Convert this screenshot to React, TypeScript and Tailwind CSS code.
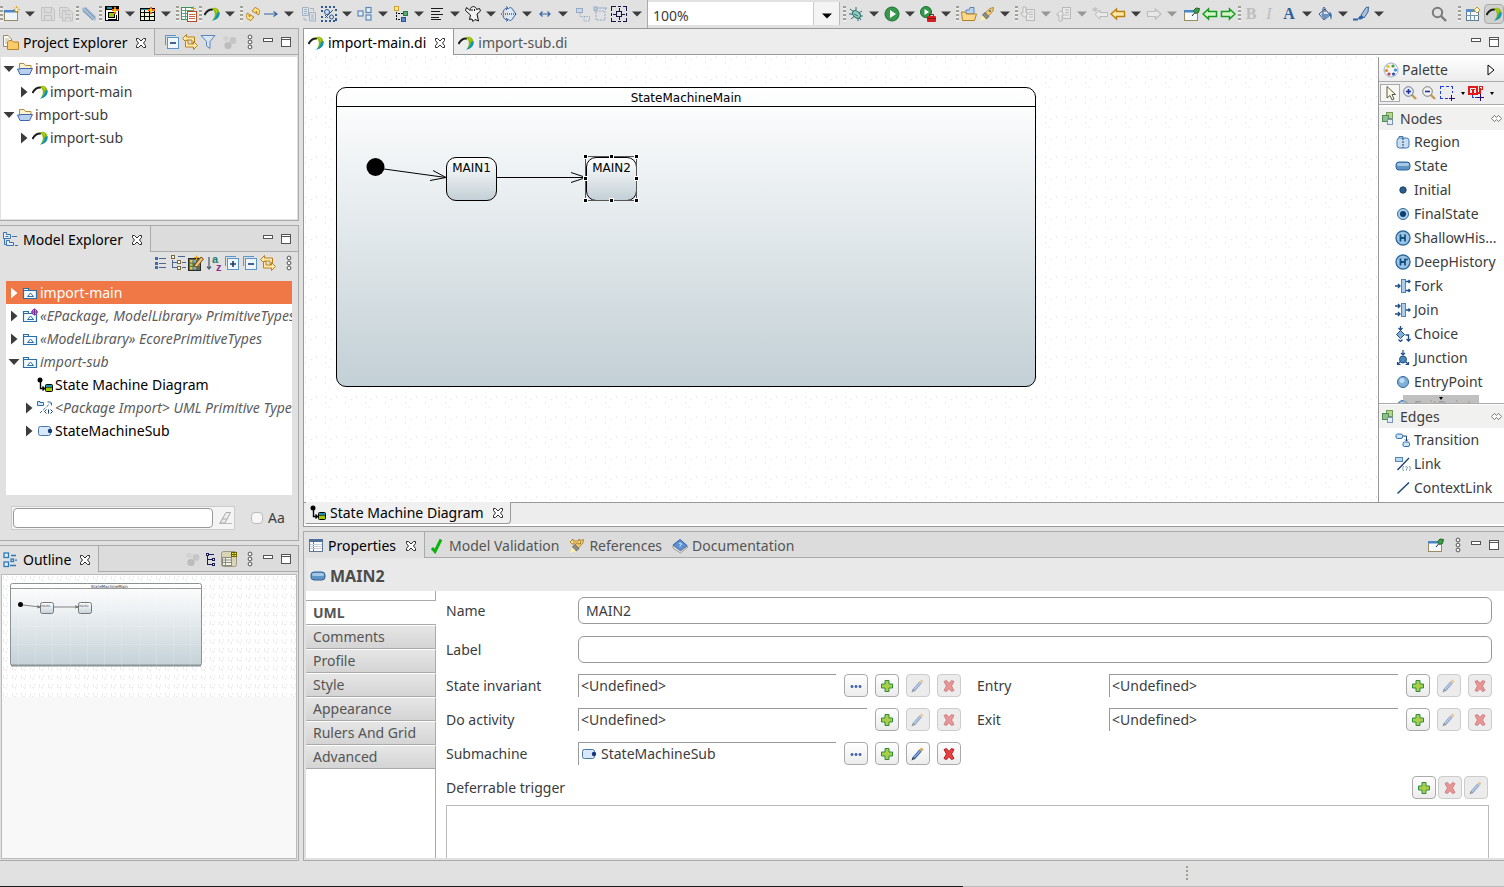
import { useState } from "react";
import type { ReactNode } from "react";
import clsx from "clsx";

const BLUE = "#3465a4";
const DARK = "#3c3c3c";

const papyrus = (
  <>
    <path d="M0.5 9C2.5 5 5.5 3.2 9 3.5" fill="none" stroke="#1c1c1c" strokeWidth="2" />
    <path d="M7.5 2.5C11 0.5 15.5 2.5 15.5 7.5C15.5 11 13 13.5 8.5 14.5C10 12 11 10 10.8 7.5C10.6 5.200 9.500 3.500 7.500 2.500Z" fill="#8fb80c" />
    <path d="M9 2.500C12 2 13.500 4 13 7C12.500 5 11 3.500 9 2.500Z" fill="#b9d92c" />
    <path d="M15.500 6C16.200 11 13 14 8 14.700C11 12.500 12.500 10 13 7Z" fill="#0b94bd" />
  </>
);

const plusCross = (
  <path d="M6 2.5h4V6h3.5v4H10v3.5H6V10H2.5V6H6Z" fill="#a8cf45" stroke="#2e8b46" />
);

const pencil = (
  <>
    <path d="M3.5 12.5L10.5 4.5" stroke="#23549c" strokeWidth="3" />
    <path d="M4 11.500L10.500 4.500" stroke="#8fb6e8" strokeWidth="1.200" />
    <path d="M10.5 4.5L12.5 2.5" stroke="#d9a54a" strokeWidth="3" />
    <path d="M1.5 14.5L2.5 11.5L4.5 13Z" fill="#333" />
  </>
);

const folderTri = (
  <>
    <path d="M1.5 13.5V3.5H6.5V5.5H14.5V13.5Z" fill="#f4f9fd" stroke="#2a6fa8" strokeWidth="1.2" />
    <path d="M1.5 5.5H7" stroke="#2a6fa8" />
    <path d="M5.5 11.5L8.5 8L11.5 11.5Z" fill="#fff" stroke="#2a6fa8" />
  </>
);

const cubes = (
  <>
    <rect x="5.5" y="1.5" width="6" height="6" fill="#b9d48c" stroke="#6f9a5a" />
    <rect x="1.5" y="4.5" width="6" height="6" fill="#8fbf8a" stroke="#4f8a5a" />
    <rect x="6.5" y="8.5" width="5" height="5" fill="#e3eef8" stroke="#7894b5" />
  </>
);

const roundH = (
  <>
    <circle cx="8" cy="8" r="7" fill="#9cc4e4" stroke="#2f6a9f" strokeWidth="1.4" />
    <path d="M5.5 4.5V11.5M10 4.5V11.5M5.5 8H10" stroke="#14507f" strokeWidth="1.8" />
  </>
);

const pin = (
  <>
    <rect x="0.5" y="4.5" width="13" height="10" fill="#f4f9fd" stroke="#9a8b5c" />
    <rect x="0" y="4" width="14" height="2.5" fill="#4a86c6" />
    <path d="M8 10L11 6.5" stroke="#222" />
    <path d="M9.5 4.5L12 2L15.5 2.5L14.5 6.5L11.5 7.5Z" fill="#3f9a45" stroke="#1d6b2b" />
  </>
);

const flashlight = (
  <>
    <path d="M5 8L11 2.5L14.5 1.5L14 5L8.5 11Z" fill="#f5cf72" stroke="#b88a2d" />
    <path d="M3.5 9L6 6.5L10 10.5L7 13Z" fill="#8d8d8d" stroke="#666" />
    <path d="M1 15L3.5 9.5L7 13Z" fill="#fff3a0" />
    <circle cx="11" cy="5" r="1" fill="#3465a4" />
  </>
);

const ICONS: Record<string, ReactNode> = {
  papyrus,
  newWizard: (
    <>
      <rect x="0.5" y="4.5" width="13" height="10" fill="#eef6fc" stroke="#9a8b5c" />
      <rect x="0" y="4" width="14" height="2.5" fill="#4a86c6" />
      <path d="M12.5 0V7M9 3.5H16M10.5 1.5L14.5 5.5M14.5 1.5L10.5 5.5" stroke="#d2a43a" />
      <circle cx="12.5" cy="3.5" r="1.5" fill="#fff6c4" />
    </>
  ),
  save: (
    <g fill="none" stroke="#c3c3c3">
      <path d="M1.5 1.5H12.5L14.5 3.5V14.5H1.5Z" fill="#dadada" />
      <path d="M4.5 1.5V6.5H11.5V1.5M4.5 14.5V9.5H11.5V14.5" />
    </g>
  ),
  saveAll: (
    <g fill="#dadada" stroke="#c3c3c3">
      <path d="M1.5 1.5H9.5L11.5 3.5V11.5H1.5Z" />
      <path d="M4.5 4.5H12.5L14.5 6.5V15H4.5Z" />
      <path d="M7.5 4.5V8.5H12.5M7.5 15V11.5H12.5V15" />
    </g>
  ),
  wrench: (
    <>
      <path d="M1 2L5 1L15 10.5L14.5 14.5L11 14L1.5 5.5Z" fill="#a9bdd3" />
      <path d="M4 2L14 12M2 4.5L12 14" stroke="#6f90b3" />
    </>
  ),
  tableBlack: (
    <g shapeRendering="crispEdges">
      <rect x="1" y="0" width="14" height="15" fill="#000" />
      <rect x="2" y="4" width="12" height="10" fill="#fff" />
      <rect x="3" y="1" width="5" height="2" fill="#1292b4" />
      <rect x="4.5" y="6.500" width="6" height="5" fill="#9cc80e" stroke="#000" />
      <path d="M12.5 9V14M4 13.500H12" stroke="#000" />
      <path d="M11 1V8M7.500 4H15" stroke="#f26522" strokeWidth="2" />
      <path d="M11 3V6" stroke="#ffd800" strokeWidth="2" />
    </g>
  ),
  tableGrid: (
    <g shapeRendering="crispEdges">
      <rect x="0.5" y="2.5" width="14" height="12" fill="#e9f3d0" stroke="#000" />
      <path d="M0 6.5H15M0 10.5H15M4.5 3V15M9.5 3V15" stroke="#000" />
      <rect x="1" y="3" width="8" height="1" fill="#1292b4" />
      <path d="M11 1V8M7.5 4H15" stroke="#f26522" strokeWidth="2" />
      <path d="M11 3V6" stroke="#ffd800" strokeWidth="2" />
    </g>
  ),
  tableDoc: (
    <g shapeRendering="crispEdges">
      <rect x="0.5" y="1.5" width="12" height="12" fill="#fff" stroke="#3e8e5f" />
      <path d="M0 4.5H13M4.5 2V14M0 7.5H13M0 10.500H13" stroke="#5aa779" />
      <rect x="6.5" y="5.5" width="9" height="10" fill="#fff" stroke="#b04b22" />
      <path d="M8 8.5H14M8 10.5H14M8 12.5H14" stroke="#c9683e" />
      <path d="M12.5 0V5M10 2.5H15" stroke="#dba62a" />
    </g>
  ),
  refresh: (
    <g fill="#ffe38a" stroke="#b8821a">
      <path d="M7 5L10.500 1L11.500 2.500C14.500 2.500 15.500 5.500 13.500 9L11.500 7.500C12.500 6 12 5 11 5.500L11.500 7.500Z" />
      <path d="M9 11L5.500 15L4.500 13.500C1.500 13.500 0.500 10.500 2.500 7L4.500 8.500C3.500 10 4 11 5 10.500L4.500 8.500Z" />
    </g>
  ),
  arrowBlue: <path d="M1 8H14M10.5 5.5L14 8L10.5 10.5" fill="none" stroke={BLUE} strokeWidth="1.2" />,
  copyGrey: (
    <g fill="#dde3ea" stroke="#a3b1c0">
      <path d="M1.5 1.5H7.5V9.5H1.5Z" />
      <path d="M3 3.5H6M3 5.5H6M3 7.5H6M9 2.5H12.5V5" fill="none" />
      <path d="M8.5 6.5H14.5V15H8.5Z" />
      <path d="M10 9H13M10 11H13M10 13H13M3 11.5V14H6" fill="none" />
    </g>
  ),
  selectAll: (
    <g fill="none" stroke="#2c5a94">
      <path d="M0 1H2M4 1H6M8 1H10M12 1H14M0 15H2M4 15H6M8 15H10M12 15H14M1 4V6M1 10V12M15 3V5M15 8V10M15 12V15" strokeWidth="2" />
      <circle cx="6" cy="6" r="2.5" fill="#cfe0f2" />
      <circle cx="10.5" cy="11" r="2" fill="#cfe0f2" />
      <path d="M12 4L4 12M4 9L7 12" />
    </g>
  ),
  threeBoxes: (
    <g fill="#e4eef8" stroke="#5c87b8" strokeWidth="1.2">
      <rect x="1" y="5" width="5" height="5" />
      <rect x="9" y="1.5" width="5" height="5" />
      <rect x="9" y="9" width="5" height="5" />
    </g>
  ),
  arrange: (
    <g shapeRendering="crispEdges">
      <rect x="1.5" y="0.5" width="4" height="4" fill="#ffe9a6" stroke="#d3a024" />
      <rect x="10.5" y="5.5" width="4" height="4" fill="#55b070" stroke="#2d7a45" />
      <rect x="8.5" y="11.5" width="4" height="4" fill="#5b86c9" stroke="#2e5698" />
      <path d="M3.5 6V13.5H8M5 7.5H10" stroke="#111" fill="none" strokeDasharray="2 1" />
    </g>
  ),
  alignLeft: <path d="M2 2.5H14M2 5.5H11M2 8.5H14M2 11.500H10M2 13.500H12" stroke="#1d1d1d" shapeRendering="crispEdges" />,
  ghost: (
    <g fill="#f3f3f3" stroke="#111">
      <path d="M5 4.500C5 -0.500 11 -0.500 11.500 3.500L14.500 2.500L15.500 5L12 8L13.500 15L10 13.500L8 15.500L7 13L4.500 13.500L5.500 9L0.500 4.500L1.500 1.500L4.500 4Z" />
      <path d="M7 3V5M9.500 3V5" />
    </g>
  ),
  flip: (
    <g fill="none" stroke={BLUE}>
      <path d="M7 3C9 1 10.500 1 12 4L15 8L12 12C10 15.500 9 15 7 13" fill="#dbe9f6" />
      <path d="M2 7C2 4 4 2 7 2M2 9C2 12 4 14 7 14M5 0.500L7 2L5 4M5 12L7 14L5 15.500" />
      <path d="M0 8H16" stroke="#111" strokeDasharray="1 1" />
    </g>
  ),
  leftRight: <path d="M3 8H13M5.5 5.5L3 8L5.5 10.5M10.5 5.5L13 8L10.5 10.5" fill="none" stroke={BLUE} strokeWidth="1.2" />,
  moveGrey: (
    <g fill="#cbd8e7" stroke="#94abc6">
      <rect x="1.5" y="2.5" width="6" height="4" />
      <path d="M5 7V10.5H8M9 10.5H14.5V15H9Z" fill="none" strokeDasharray="1.5 1" />
    </g>
  ),
  sizeGrey: (
    <g fill="none" stroke="#94abc6">
      <rect x="3" y="5" width="9" height="9" strokeDasharray="2 1" />
      <path d="M2 2H14M2 2V6M14 2L12 4" />
      <rect x="1" y="1" width="3" height="3" fill="#cbd8e7" />
    </g>
  ),
  fitPage: (
    <g fill="none" stroke="#15154a" shapeRendering="crispEdges">
      <path d="M0.5 4.5V0.5H4.5M11.5 0.5H15.5V4.5M15.5 11.5V15.5H11.5M4.5 15.5H0.5V11.5M6.5 0.5H9.5M6.5 15.5H9.5M0.5 6.5V9.5M15.5 6.5V9.5" />
      <rect x="5.5" y="5.5" width="5" height="5" />
      <path d="M8 2V5M8 11V14M2 8H5M11 8H14" />
    </g>
  ),
  bug: (
    <g stroke="#2d6d78" fill="none">
      <path d="M2 3L6 6M1 8H5M3 13L6 10.5M8 1V4M14 5L11 7M15 10H11M10 15V12M13 14L11 11" />
      <ellipse cx="8.5" cy="8.5" rx="4.5" ry="3" fill="#8fd0a4" transform="rotate(40 8.5 8.5)" />
      <path d="M6 8L10 10" stroke="#3d66c0" />
    </g>
  ),
  run: (
    <>
      <circle cx="8" cy="8" r="7" fill="#34994a" stroke="#1e6e34" />
      <path d="M6 4V12L12 8Z" fill="#fff" />
    </>
  ),
  runTools: (
    <>
      <circle cx="6" cy="6" r="5.5" fill="#34994a" stroke="#1e6e34" />
      <path d="M4.5 3V9L9 6Z" fill="#fff" />
      <rect x="7" y="10" width="9" height="6" rx="1" fill="#d81f1f" />
      <path d="M9.5 10V8.5H13.5V10" fill="none" stroke="#8e1010" />
      <path d="M7 12.5H16" stroke="#8e1010" />
    </>
  ),
  openType: (
    <>
      <path d="M5 8V4H8L9 1.5H13V8Z" fill="#b8d2ee" stroke="#5a83b8" />
      <path d="M1.5 14.5L0.5 6H4L5.5 8H15.5L13.5 14.5Z" fill="#fbd88a" stroke="#b17f22" />
    </>
  ),
  flashlight,
  annNext: (
    <g fill="#e9e9e9" stroke="#b9b9b9">
      <rect x="6.5" y="3.5" width="8" height="11" />
      <path d="M9 6H13M9 8.5H13M9 11H13" />
      <path d="M3 1H6V7H8.5L4.5 11.5L0.5 7H3Z" />
    </g>
  ),
  annPrev: (
    <g fill="#e9e9e9" stroke="#b9b9b9">
      <rect x="6.5" y="1.5" width="8" height="11" />
      <path d="M9 4H13M9 6.5H13M9 9H13" />
      <path d="M3 15H6V9H8.5L4.5 4.5L0.5 9H3Z" />
    </g>
  ),
  lastEdit: (
    <g fill="#eaeaea" stroke="#b9b9b9">
      <path d="M3 8.5L8 4V6.5H15.5V10.5H8V13Z" />
      <path d="M3 1V6M0.5 2.5L5.5 4.5M5.5 2.5L0.5 4.5" />
    </g>
  ),
  backYellow: <path d="M1 8L6.5 3V5.5H14.5V10.5H6.5V13Z" fill="#ffe9a8" stroke="#bd7e10" strokeWidth="1.4" />,
  fwdGrey: <path d="M15 8L9.5 3V5.5H1.5V10.5H9.5V13Z" fill="#e8e8e8" stroke="#bcbcbc" strokeWidth="1.2" />,
  backGreen: <path d="M1 8L6.5 3V5.5H14.5V10.5H6.5V13Z" fill="#d6f5c8" stroke="#159a20" strokeWidth="1.5" />,
  fwdGreen: <path d="M15 8L9.5 3V5.5H1.5V10.5H9.5V13Z" fill="#d6f5c8" stroke="#159a20" strokeWidth="1.5" />,
  pin,
  bucket: (
    <>
      <path d="M2 8L8 3L13 9L7 14Z" fill="#dbe4ef" stroke="#39557c" />
      <path d="M4 8H13L7 14Z" fill="#6a90c2" />
      <path d="M6 8V2.5C6 1 8 1 8 2.5V6" fill="none" stroke="#39557c" />
      <path d="M12 6C15 6 15.5 10 14 14C13 11 13 9 12 6Z" fill="#3a6fb5" />
    </>
  ),
  brush: (
    <>
      <path d="M8 9L13 1.5L15.5 1L15 6L11 12Z" fill="#a8c0dc" stroke="#39659b" />
      <path d="M5 13C6 9.5 8 8.5 10 10.5C10.5 13 8 14.5 5 13Z" fill="#2f62a8" />
      <path d="M0 13.5H5" stroke="#2f62a8" strokeWidth="2" />
    </>
  ),
  search: (
    <g fill="none" stroke="#7b7b7b">
      <circle cx="6.5" cy="6.5" r="4.7" strokeWidth="2" />
      <path d="M10 10L15 15" strokeWidth="2.4" />
    </g>
  ),
  perspective: (
    <>
      <rect x="1.5" y="3.5" width="12" height="11" fill="#f6f9fc" stroke="#5d7a8e" />
      <rect x="1" y="3" width="9" height="3" fill="#5a8fc8" />
      <path d="M1 9.5H14M5.5 6V15M9.5 9V15" stroke="#7895a8" />
      <path d="M12 1L15 4L12 7L9 4Z" fill="#fff6cf" stroke="#c8962a" />
    </>
  ),
  projExplorer: (
    <>
      <path d="M0.5 0.5H5L8.5 4V11.5H0.5Z" fill="#fff" stroke="#a88a4c" />
      <path d="M2 4H6M2 6H6M2 8H4" stroke="#c2b48e" />
      <path d="M4.5 14.5V7L6 5.500H9L10.500 7H15.5V14.5Z" fill="#f9cb6b" stroke="#b9832a" />
    </>
  ),
  collapse: (
    <g fill="#eef6fc" stroke="#5b94c6">
      <path d="M1.5 11V1.5H12" fill="none" />
      <rect x="3.5" y="3.5" width="11" height="11" />
      <path d="M6 9H12" stroke="#163f73" strokeWidth="1.6" />
    </g>
  ),
  expand: (
    <g fill="#eef6fc" stroke="#5b94c6">
      <path d="M1.5 11V1.5H12" fill="none" />
      <rect x="3.5" y="3.5" width="11" height="11" />
      <path d="M6 9H12M9 6V12" stroke="#163f73" strokeWidth="1.6" />
    </g>
  ),
  link: (
    <g fill="#ffe9ae" stroke="#b8821a">
      <path d="M0.5 4.500L4.500 0.500V3H12.500V9.500H10V6H4.500V8.500Z" />
      <path d="M15.500 11.500L11.500 7.500V10H6V6.500H3.500V13H11.500V15.500Z" />
    </g>
  ),
  filter: <path d="M1 1.5H15L10 7.5V14.5L6.5 12V7.5Z" fill="#d5e5f4" stroke="#5b86b5" />,
  balls: (
    <g fill="#c6c6c6">
      <circle cx="4" cy="4.5" r="2.8" fill="#d2d2d2" />
      <circle cx="11" cy="6.5" r="3.4" />
      <circle cx="6" cy="11.5" r="3.6" fill="#bcbcbc" />
    </g>
  ),
  dots: (
    <g fill="#fafafa" stroke="#555">
      <circle cx="8" cy="3" r="1.9" />
      <circle cx="8" cy="8" r="1.9" />
      <circle cx="8" cy="13" r="1.9" />
    </g>
  ),
  min: <rect x="3.5" y="4.5" width="9" height="3" fill="#fff" stroke="#555" shapeRendering="crispEdges" />,
  max: (
    <g shapeRendering="crispEdges">
      <rect x="3.5" y="3.5" width="9" height="9" fill="#fff" stroke="#555" />
      <path d="M3 5.5H13" stroke="#555" />
    </g>
  ),
  close: <path d="M3.5 3.5H5.5L8 6L10.5 3.5H12.5V5.5L10.5 8L12.5 10.5V12.5H10.5L8 10L5.5 12.5H3.5V10.5L5.5 8L3.5 5.5Z" fill="#fff" stroke="#2a2a2a" />,
  folder: (
    <>
      <path d="M2.5 13V2.5H7L8.5 4.5H14V8" fill="#fdf2cf" stroke="#b38b3f" />
      <path d="M0.5 8H3L4 7.5H15.5L12.5 13.5H3Z" fill="#b9d0ef" stroke="#3f67b0" />
    </>
  ),
  modelExplorer: (
    <g fill="#e6f0fa" stroke="#3a72ae">
      <path d="M0.5 6.500V0.500H3.500V2.500H7.500V6.500Z" />
      <path d="M3.500 13.500V8.500H6.500V10.500H10.500V13.500Z" />
      <path d="M1.500 7V12.500H3.500M2.500 4.500H5.500M9 4.5H14M12 13.5H15" fill="none" />
    </g>
  ),
  list: (
    <g shapeRendering="crispEdges">
      <path d="M7 3.5H14M7 8.5H14M7 12.5H14" stroke="#49678f" />
      <path d="M3 2h3v3H3ZM3 7h3v3H3ZM3 11h3v3H3Z" fill="#3e6cae" />
    </g>
  ),
  tree: (
    <g fill="#fff" stroke="#7a6a3a" shapeRendering="crispEdges">
      <path d="M2.5 5V12.5H7M2.5 7.5H7M8 1.5H15M12 7.5H16M12 12.5H16" fill="none" stroke="#49678f" />
      <rect x="1.5" y="0.5" width="3" height="3" />
      <rect x="7.5" y="5.5" width="3" height="3" />
      <rect x="7.5" y="11.5" width="3" height="3" />
    </g>
  ),
  palEdit: (
    <>
      <rect x="0.5" y="3.5" width="12" height="12" fill="#5b6a50" stroke="#2a2a2a" />
      <path d="M2 5h2.5v2.5H2ZM2 12h2.5v2.5H2Z" fill="#e8c84a" />
      <path d="M5.5 5H8v2.5H5.5ZM5.5 12H8v2.5H5.5Z" fill="#6fb7e0" />
      <path d="M2 8.5h2.5V11H2ZM9 8.5h2.5V11H9Z" fill="#9ad05a" />
      <path d="M6 11L13 2L15.5 4L9 12Z" fill="#f2c37a" stroke="#7a4c1a" />
      <path d="M8.500 0.500V5M6 2.500H11" stroke="#e0a020" />
    </>
  ),
  eraser: (
    <>
      <path d="M3 13L9 2.500H13.500L8 13Z" fill="#eee" stroke="#aaa" />
      <path d="M5.500 9H10" stroke="#aaa" />
      <path d="M2 13.5H15" stroke="#bbb" />
    </>
  ),
  outline: (
    <g fill="#e6f0fa" stroke="#2d79b8" strokeWidth="1.3">
      <rect x="1" y="1" width="4.500" height="4.500" />
      <rect x="1" y="10" width="4.500" height="4.500" />
      <rect x="8" y="7" width="2.5" height="2.5" />
      <path d="M8 3.5H13M7 13.5H13M12 8.2H14" fill="none" />
    </g>
  ),
  treeDark: (
    <g fill="#fff" stroke="#1b1b5a" shapeRendering="crispEdges">
      <path d="M4.5 4V13.5H9M4.5 8.5H9M6 3.5H11" fill="none" />
      <rect x="3.5" y="2.5" width="2" height="2" />
      <rect x="9.5" y="7.5" width="2" height="2" />
      <rect x="9.5" y="12.5" width="2" height="2" />
    </g>
  ),
  overview: (
    <>
      <rect x="0.5" y="0.5" width="15" height="15" rx="2" fill="#d8d4b4" stroke="#9c9a88" />
      <rect x="1.5" y="6.5" width="9" height="8" fill="#f4f4ee" stroke="#8c8a78" />
      <path d="M2 9H10M2 11.5H10M4.5 7V14" stroke="#8c8a78" />
      <rect x="10.5" y="1.5" width="5" height="4" fill="#ffee50" stroke="#6b6400" />
      <path d="M13 2V6M10.5 3.5H15" stroke="#6b6400" />
    </>
  ),
  folderTri,
  folderEpkg: (
    <>
      {folderTri}
      <circle cx="12.5" cy="4" r="2.6" fill="#c9a3d8" stroke="#7a2f9a" />
      <path d="M12.5 0.5V7.5M9 4H16" stroke="#7a2f9a" />
    </>
  ),
  smDiagram: (
    <>
      <circle cx="3" cy="3" r="2.5" fill="#000" />
      <path d="M3.5 3V11.5H7M5.5 9.5L7.5 11.5L5.5 13.5" fill="none" stroke="#000" strokeWidth="1.4" />
      <rect x="8.500" y="7.500" width="7" height="7" rx="1" fill="#a5c800" stroke="#000" />
      <rect x="9" y="8" width="6" height="2" fill="#1292b4" />
      <path d="M8.500 10.500H15.500" stroke="#000" strokeWidth="0.600" />
    </>
  ),
  pkgImport: (
    <g fill="none" stroke="#2a6fa8">
      <path d="M0.5 5.5V1.5H3V2.5H6.5V5.5Z" fill="#dcebf7" />
      <path d="M3 13L14 2.5M10.5 2H14.5V6" strokeDasharray="3 1.5" />
      <path d="M9.5 9.5L7.5 11.5L9.5 13.5M13.5 9.5L15.5 11.5L13.5 13.5M11.5 9.5V13.5" stroke="#163f73" />
    </g>
  ),
  stateMachine: (
    <>
      <rect x="1.5" y="3.5" width="12" height="9" rx="2" fill="#d8e8f6" stroke="#4678ac" />
      <circle cx="13" cy="8" r="2.2" fill="#17397a" />
    </>
  ),
  palette: (
    <>
      <circle cx="8" cy="8" r="7" fill="#f0f4fa" stroke="#9fb3cf" />
      <circle cx="5" cy="4.5" r="1.6" fill="#e7c21c" />
      <circle cx="10" cy="4" r="1.6" fill="#4f9c3c" />
      <circle cx="12.5" cy="8" r="1.6" fill="#3d8cc8" />
      <circle cx="3.5" cy="8.5" r="1.6" fill="#e78b1c" />
      <circle cx="6" cy="12" r="1.6" fill="#c43c3c" />
      <circle cx="10.5" cy="12" r="1.6" fill="#2f4fa8" />
    </>
  ),
  cursor: <path d="M5 1.5V13L8 10.5L10 15L12 14L10 9.5H13.5Z" fill="#fdfbe8" stroke="#5e5a40" />,
  zoomIn: (
    <>
      <path d="M9.5 9.5L14 14" stroke="#c29b52" strokeWidth="2.4" />
      <circle cx="6.5" cy="6.5" r="4.8" fill="#e3ecf7" stroke="#6a7888" />
      <path d="M4 6.5H9M6.5 4V9" stroke="#1f2f9c" strokeWidth="1.6" />
    </>
  ),
  zoomOut: (
    <>
      <path d="M9.5 9.5L14 14" stroke="#c29b52" strokeWidth="2.4" />
      <circle cx="6.5" cy="6.5" r="4.8" fill="#f1f1ee" stroke="#7b7b7b" />
      <path d="M4 6.5H9" stroke="#1f2f9c" strokeWidth="1.6" />
    </>
  ),
  marquee: (
    <g fill="none" shapeRendering="crispEdges">
      <path d="M1.500 4V1.500H5M7 1.500H10M11.500 1.500H13.500V4M13.500 6V8M1.500 6V9M1.500 10.500V13.500H4M6 13.500H9" stroke="#1b3fe0" />
      <path d="M12.5 10V16M10 13.5H16" stroke="#2b0a6b" />
    </g>
  ),
  marqueeRed: (
    <g fill="none" shapeRendering="crispEdges">
      <path d="M1 2H9V9H1ZM3 4.500H7M5 4V8M9 8H12V3" stroke="#e01919" strokeWidth="1.5" />
      <rect x="11.500" y="1.5" width="3" height="3" stroke="#e01919" />
      <path d="M4 12.5H9M4.5 10V12" stroke="#1b3fe0" strokeDasharray="2 1" />
      <path d="M12.5 9V16M9 12.5H16" stroke="#2b0a6b" />
    </g>
  ),
  cubes,
  pinDrawer: <path d="M5 3.500L0.500 8L5 12.500L8 9.500L11 12.500L15.500 8L11 3.500L8 6.500Z" fill="#fff" stroke="#666" strokeWidth="1.300" />,
  region: (
    <>
      <rect x="2" y="4" width="12" height="10" rx="2.5" fill="#c9dff1" stroke="#3f77ad" />
      <path d="M4 4V2.5H8V4" fill="none" stroke="#3f77ad" />
      <path d="M8 4V14" stroke="#1b3f6d" strokeDasharray="2 1" />
    </>
  ),
  state: (
    <>
      <rect x="1" y="4" width="14" height="8" rx="3" fill="#5f95c4" stroke="#2f639a" />
      <rect x="2" y="5" width="12" height="3" rx="1.5" fill="#a5c8e4" />
    </>
  ),
  initial: <circle cx="8" cy="8" r="3.2" fill="#2d5d8c" stroke="#1a4068" />,
  final: (
    <>
      <circle cx="8" cy="8" r="5.5" fill="#a9cdea" stroke="#2f6a9f" />
      <circle cx="8" cy="8" r="3" fill="#0f3f6e" />
    </>
  ),
  shallow: roundH,
  deep: (
    <>
      {roundH}
      <circle cx="12" cy="5.5" r="1" fill="#14507f" />
    </>
  ),
  fork: (
    <g fill="none" stroke="#1f4f84">
      <rect x="6.5" y="1.5" width="4" height="13" fill="#a9cdea" stroke="#4e88bb" />
      <path d="M0 8H5M3 6L5 8L3 10M11 3.5H15M13.5 2L15 3.5L13.5 5M11 12.5H15M13.5 11L15 12.5L13.5 14" strokeWidth="1.300" />
    </g>
  ),
  join: (
    <g fill="none" stroke="#1f4f84">
      <rect x="6.5" y="1.5" width="4" height="13" fill="#a9cdea" stroke="#4e88bb" />
      <path d="M0 4H5M3 2L5 4L3 6M0 12H5M3 10L5 12L3 14M11 8H15M13.5 6.5L15 8L13.5 9.5" strokeWidth="1.300" />
    </g>
  ),
  choice: (
    <g fill="none" stroke="#1f4f84">
      <path d="M5.500 4.500L9.500 8.500L5.500 12.500L1.500 8.500Z" fill="#7fb0d8" />
      <path d="M5.5 0V4M3.500 2L5.5 4L7.500 2M3.500 13.500L5.500 15.500L7.500 13.500M10.500 9H13.5V15M11.500 13L13.5 15L15.500 13" strokeWidth="1.300" />
    </g>
  ),
  junction: (
    <g fill="none" stroke="#1f4f84">
      <circle cx="8" cy="9.5" r="3.5" fill="#4d86b8" />
      <path d="M8 0V5M6 3L8 5L10 3M5 12L2.5 14.5M2.5 12V14.5H5.500M11 12L13.5 14.5M13.5 12V14.5H10.500" strokeWidth="1.200" />
    </g>
  ),
  entry: (
    <>
      <circle cx="8" cy="8" r="5.5" fill="#7fb0d8" stroke="#2f6a9f" />
      <circle cx="7" cy="6.5" r="2.5" fill="#c3dcf0" />
    </>
  ),
  transition: (
    <g fill="#cfe3f5" stroke="#2a6fa8">
      <rect x="1" y="2" width="6.5" height="4.5" rx="1.5" />
      <rect x="8" y="10" width="6.5" height="4.5" rx="1.5" />
      <path d="M8 4H11.5V9M10 7.5L11.5 9L13 7.5" fill="none" stroke="#163f73" />
    </g>
  ),
  linkNode: (
    <>
      <rect x="0.5" y="1.5" width="7" height="4" fill="#bcd6ec" stroke="#4e88bb" />
      <path d="M2.5 14L14 2" stroke="#163f73" strokeWidth="1.3" />
      <path d="M8.5 10C7.5 12 7.5 13 8.5 15M14.5 10C15.5 12 15.5 13 14.5 15M10.5 11C13.5 10 12.5 12 11.5 13V14.5" fill="none" stroke="#7894b5" />
    </>
  ),
  contextLink: <path d="M2.5 13.5L14 2.5" stroke="#174a7a" strokeWidth="1.5" />,
  properties: (
    <g shapeRendering="crispEdges">
      <rect x="1.5" y="1.5" width="13" height="12" fill="#fff" stroke="#5f7897" />
      <rect x="1" y="1" width="14" height="3" fill="#4e6d97" />
      <path d="M5.5 4V14" stroke="#5f7897" />
      <path d="M2 6.5H14M2 8.5H14M2 10.5H14" stroke="#c8d2de" />
    </g>
  ),
  check: <path d="M3 10L6 13.5L12 1.5" fill="none" stroke="#0ab40a" strokeWidth="3" />,
  references: (
    <>
      {flashlight}
      <path d="M1 4L4 1V3H10V1L12 4L10 6.5V5H4V6.5Z" fill="#ffe7a0" stroke="#b8821a" />
    </>
  ),
  book: (
    <>
      <path d="M1 7L8 1.5L15 7.5L8.5 13Z" fill="#5b93d6" stroke="#2d5c9e" />
      <path d="M1 7.500V10L8.5 15L15.500 9.500V8L8.500 13Z" fill="#eee" stroke="#777" strokeWidth="0.700" />
      <path d="M7 6C7.500 4.500 10 5 9.500 6.500L8 7.500V8.500" fill="none" stroke="#e4eefb" />
    </>
  ),
  ellipsis: (
    <g fill="#6f90d8" stroke="#2448a0">
      <circle cx="4" cy="8.5" r="1" />
      <circle cx="8" cy="8.5" r="1" />
      <circle cx="12" cy="8.5" r="1" />
    </g>
  ),
  plus: plusCross,
  pencil,
  remove: <path d="M3 3.5L5.5 2.5L8 5.5L10.5 2.5L13 3.5L10.5 8L13 12.5L10.5 13.5L8 10.5L5.5 13.5L3 12.5L5.5 8Z" fill="#e8403f" stroke="#b81c24" />,
};

function Icon({ name, className }: { name: string; className?: string }) {
  return (
    <svg viewBox="0 0 16 16" className={clsx("h-4 w-4 shrink-0", className)} aria-hidden="true">
      {ICONS[name]}
    </svg>
  );
}

function Caret({ dim }: { dim?: boolean }) {
  return (
    <button aria-label="More" className="flex h-6 w-[18px] shrink-0 items-center justify-center">
      <svg viewBox="0 0 10 6" className="h-[6px] w-[10px]">
        <path d="M0 0.5H10L5 5.5Z" fill={dim ? "#969693" : DARK} />
      </svg>
    </button>
  );
}

function Handle() {
  return <span className="mx-px h-4 w-[3px] shrink-0 bg-[linear-gradient(to_right,transparent_1px,#e1e1e1_1px,#e1e1e1_1px,transparent_1px),repeating-linear-gradient(#a09f95_0_2px,#ededed_2px_4px)]" />;
}

// "|" grip, "v" caret, "-" dimmed caret, "_" small gap
const TOOLS_LEFT = [
  "newWizard", "v", "save", "saveAll", "|", "wrench", "|", "tableBlack", "v", "tableGrid", "v", "|", "tableDoc", "|",
  "papyrus", "v", "|", "refresh", "arrowBlue", "v", "_", "copyGrey", "_", "selectAll", "v", "threeBoxes", "v",
  "arrange", "v", "alignLeft", "v", "ghost", "v", "flip", "v", "leftRight", "v", "_", "moveGrey", "sizeGrey",
  "fitPage", "v",
];

const TOOLS_RIGHT = [
  "|", "bug", "v", "run", "v", "runTools", "v", "|", "openType", "flashlight", "v", "|", "annNext", "-", "annPrev", "-",
  "lastEdit", "backYellow", "v", "fwdGrey", "-", "_", "pin", "backGreen", "fwdGreen", "|", "B", "I", "_", "A", "v",
  "bucket", "v", "brush", "v",
];

function Tools({ items }: { items: string[] }) {
  return (
    <>
      {items.map((t, i) => {
        if (t === "|") return <Handle key={i} />;
        if (t === "v" || t === "-") return <Caret key={i} dim={t === "-"} />;
        if (t === "_") return <span key={i} className="w-[2px] shrink-0" />;
        if (t.length === 1)
          return (
            <button
              key={i}
              className={clsx(
                "h-6 w-[18px] shrink-0 font-['Liberation_Serif',serif] text-base leading-6",
                t === "A" ? "font-bold text-[#2d5f9e]" : "text-[#bdbdbd]",
                t === "B" && "font-bold",
                t === "I" && "italic",
              )}
            >
              {t}
            </button>
          );
        return (
          <button key={i} aria-label={t} className="flex h-6 w-[18px] shrink-0 items-center justify-center">
            <Icon name={t} />
          </button>
        );
      })}
    </>
  );
}

function Toolbar() {
  return (
    <header className="flex h-7 shrink-0 items-center overflow-hidden bg-[#e1e1e1]">
      <span className="h-4 w-[3px] shrink-0 bg-[repeating-linear-gradient(#a09f95_0_2px,#ededed_2px_4px)]" />
      <Tools items={TOOLS_LEFT} />
      <div className="relative ml-px mr-[2px] h-7 w-[193px] shrink-0 border-l border-[#aaa] pb-[3px] pt-[2px]">
        <select
          aria-label="Zoom"
          className="h-full w-full appearance-none border-r border-[#bbb] bg-white bg-[linear-gradient(to_right,#fff_165px,#ccc_165px,#ccc_166px,#f4f4f4_166px)] px-[5px] pt-[4px] text-sm text-[#3c3c3c] outline-none"
        >
          <option>100%</option>
        </select>
        <svg viewBox="0 0 10 6" className="pointer-events-none absolute right-2 top-[13px] h-[6px] w-[10px]">
          <path d="M0 0.5H10L5 5.5Z" fill="#000" />
        </svg>
      </div>
      <Tools items={TOOLS_RIGHT} />
      <div className="ml-auto flex shrink-0 items-center gap-[2px]">
        <button aria-label="Search" className="mr-2">
          <Icon name="search" />
        </button>
        <Handle />
        <button aria-label="Open Perspective" className="ml-px">
          <Icon name="perspective" />
        </button>
        <button aria-label="Papyrus" className="ml-px rounded border border-[#aaa] bg-[#d0d0d0] p-px">
          <Icon name="papyrus" />
        </button>
      </div>
    </header>
  );
}

function IconButton({ name, className }: { name: string; className?: string }) {
  return (
    <button aria-label={name} className={clsx("flex h-[18px] w-[18px] items-center justify-center", className)}>
      <Icon name={name} />
    </button>
  );
}

function ViewHeader({ icon, title, tools }: { icon: string; title: string; tools?: ReactNode }) {
  return (
    <div className="flex h-[26px] shrink-0">
      <button className="flex items-center gap-1 border-r border-[#aaa] pl-[3px] pr-[5px] pt-px text-black">
        <Icon name={icon} />
        {title}
        <Icon name="close" className="ml-[2px]" />
      </button>
      <div className="flex flex-1 items-center justify-end border-b border-[#aaa] bg-[#dcdcdc] pr-[3px]">
        {tools}
        <IconButton name="min" />
        <IconButton name="max" />
      </div>
    </div>
  );
}

function Twisty({ open, light }: { open?: boolean; light?: boolean }) {
  return (
    <svg viewBox="0 0 12 12" className="h-3 w-3 shrink-0" aria-hidden="true">
      <path d={open ? "M0.5 3H11.5L6 9Z" : "M3 0.5V11.5L9.5 6Z"} fill={light ? "#fff" : DARK} />
    </svg>
  );
}

function ProjectExplorer() {
  return (
    <section className="flex min-h-0 flex-col border-y border-r border-[#aaa]">
      <ViewHeader
        icon="projExplorer"
        title="Project Explorer"
        tools={
          <>
            <IconButton name="collapse" />
            <IconButton name="link" />
            <IconButton name="filter" className="mr-1" />
            <IconButton name="balls" />
            <IconButton name="dots" className="ml-[2px]" />
          </>
        }
      />
      <ul className="mx-px mb-px mt-[2px] min-h-0 flex-1 overflow-hidden bg-white">
        {["import-main", "import-sub"].map((name) => (
          <li key={name}>
            <div className="flex h-[23px] items-center gap-[2px] pl-[2px]">
              <Twisty open />
              <Icon name="folder" />
              {name}
            </div>
            <div className="flex h-[23px] items-center gap-[2px] pl-[17px]">
              <Twisty />
              <Icon name="papyrus" />
              {name}
            </div>
          </li>
        ))}
      </ul>
    </section>
  );
}

type TreeRow = { icon: string; text: string; kind: "selected" | "ghost" | "plain"; open?: boolean; leaf?: boolean; nested?: boolean };

const MODEL_ROWS: TreeRow[] = [
  { icon: "folderTri", text: "import-main", kind: "selected" },
  { icon: "folderEpkg", text: "«EPackage, ModelLibrary» PrimitiveTypes", kind: "ghost" },
  { icon: "folderTri", text: "«ModelLibrary» EcorePrimitiveTypes", kind: "ghost" },
  { icon: "folderTri", text: "import-sub", kind: "ghost", open: true },
  { icon: "smDiagram", text: "State Machine Diagram", kind: "plain", leaf: true, nested: true },
  { icon: "pkgImport", text: "<Package Import> UML Primitive Types", kind: "ghost", nested: true },
  { icon: "stateMachine", text: "StateMachineSub", kind: "plain", nested: true },
];

function ModelExplorer() {
  return (
    <section className="flex min-h-0 flex-col border-y border-r border-[#aaa]">
      <ViewHeader icon="modelExplorer" title="Model Explorer" />
      <div className="flex h-[29px] shrink-0 items-center justify-end pb-[7px]">
        <IconButton name="list" />
        <IconButton name="tree" />
        <IconButton name="palEdit" />
        <svg viewBox="0 0 16 16" className="mx-px h-4 w-4" aria-hidden="true">
          <path d="M3 2V14M1 11.5L3 14L5 11.5" fill="none" stroke="#4b6474" strokeWidth="1.3" />
          <text x="6" y="8" fontSize="11" fontWeight="bold" fontFamily="Liberation Sans" fill="#1d7d72">a</text>
          <text x="10" y="16" fontSize="11" fontWeight="bold" fontFamily="Liberation Sans" fill="#8d2d95">z</text>
        </svg>
        <IconButton name="expand" />
        <IconButton name="collapse" />
        <IconButton name="link" className="mr-[3px]" />
        <IconButton name="dots" />
      </div>
      <ul className="mx-[6px] min-h-0 flex-1 overflow-hidden bg-white">
        {MODEL_ROWS.map((row) => (
          <li
            key={row.text}
            className={clsx(
              "flex h-[23px] items-center gap-[2px] whitespace-nowrap",
              row.nested ? "pl-[17px]" : "pl-[2px]",
              row.kind === "selected" && "bg-[#f07746] text-white",
              row.kind === "ghost" && "italic text-[#5c5c5c]",
              row.kind === "plain" && "text-black",
            )}
          >
            {row.leaf ? <span className="w-3 shrink-0" /> : <Twisty open={row.open} light={row.kind === "selected"} />}
            <Icon name={row.icon} />
            {row.text}
          </li>
        ))}
      </ul>
      <div className="flex h-[45px] shrink-0 items-center pl-[11px]">
        <div className="flex h-6 w-56 items-center justify-between border border-[#ccc] bg-[#f4f4f4] p-px">
          <input
            aria-label="Filter"
            className="h-5 w-[200px] rounded border border-[#999] bg-white px-1 outline-none"
          />
          <Icon name="eraser" />
        </div>
        <label className="ml-4 flex items-center gap-[5px]">
          <input type="checkbox" className="h-3 w-3 appearance-none rounded-sm border border-[#bbb] bg-[#f7f7f7]" />
          Aa
        </label>
      </div>
    </section>
  );
}

function DotGrid({ id, cell }: { id: string; cell: number }) {
  return (
    <svg className="absolute inset-0 h-full w-full" aria-hidden="true">
      <pattern id={id} width={cell} height={cell} patternUnits="userSpaceOnUse">
        <g fill="#ececec" shapeRendering="crispEdges">
          <rect x="1" y="1" width="1" height="2" />
          <rect x={cell * 0.3} y="4" width="2" height="1" />
          <rect x={cell * 0.6} y="1" width="1" height="2" />
          <rect x="1" y={cell * 0.35} width="1" height="2" />
          <rect x="4" y={cell * 0.6} width="1" height="1" />
        </g>
      </pattern>
      <rect width="100%" height="100%" fill={`url(#${id})`} />
    </svg>
  );
}

function Outline() {
  return (
    <section className="flex min-h-0 flex-col border-y border-r border-[#aaa]">
      <ViewHeader
        icon="outline"
        title="Outline"
        tools={
          <>
            <IconButton name="balls" />
            <IconButton name="treeDark" />
            <IconButton name="overview" className="mr-[3px]" />
            <IconButton name="dots" />
          </>
        }
      />
      <div className="mx-px mb-px mt-[2px] min-h-0 flex-1 border border-[#bbb] bg-[#f8f8f8]">
        <div className="relative h-[122px] bg-white">
          <DotGrid id="outlineDots" cell={9} />
          <svg viewBox="0 0 192 84" className="absolute left-2 top-2 h-[84px] w-48">
            <defs>
              <linearGradient id="miniFill" x1="0" y1="0" x2="0" y2="1">
                <stop offset="0" stopColor="#fff" />
                <stop offset="1" stopColor="#c5d2d8" />
              </linearGradient>
            </defs>
            <rect x="0.5" y="0.5" width="191" height="82" rx="2" fill="url(#miniFill)" stroke="#8a9296" />
            <path d="M0 5.5H192" stroke="#999" />
            <path d="M1 82.5H191" stroke="#8a9296" strokeWidth="2" />
            <path d="M8.5 0V84M25.5 0V84M42.5 0V84M60.5 0V84M77.5 0V84M94.5 0V84M111.5 0V84M129.5 0V84M146.5 0V84M163.5 0V84M180.5 0V84M0 26.5H192M0 43.5H192M0 61.5H192" stroke="#fff" strokeOpacity="0.15" />
            <text x="81" y="5" fontSize="4" fontFamily="DejaVu Sans" fill="#333">StateMachineMain</text>
            <circle cx="10.5" cy="21.5" r="2.5" />
            <path d="M13 22L30 24M44 24H68M27 22.5L30 24L27 25M65 22.5L68 24L65 25" fill="none" stroke="#555" strokeWidth="0.7" />
            <rect x="30.5" y="19.5" width="13" height="11" rx="2" fill="url(#miniFill)" stroke="#777" />
            <rect x="68.5" y="19.5" width="13" height="11" rx="2" fill="url(#miniFill)" stroke="#777" />
            <text x="31" y="24" fontSize="3" fontFamily="DejaVu Sans" fill="#555">MAIN1</text>
            <text x="69" y="24" fontSize="3" fontFamily="DejaVu Sans" fill="#555">MAIN2</text>
          </svg>
        </div>
      </div>
    </section>
  );
}

function StateNode({ name, selected, className }: { name: string; selected?: boolean; className: string }) {
  return (
    <div
      className={clsx(
        "absolute h-11 w-[51px] rounded-[10px] border border-black bg-linear-to-b from-white to-[#c3d0d6] pt-[2px] text-center",
        className,
      )}
    >
      {name}
      {selected && (
        <svg viewBox="0 0 56 49" className="absolute -left-1 -top-1 h-[49px] w-14" shapeRendering="crispEdges">
          <rect x="2.5" y="2.5" width="51" height="44" fill="none" stroke="#555" />
          {[0, 26, 51].flatMap((x) =>
            [0, 22, 44].map((y) =>
              x === 26 && y === 22 ? null : <rect key={`${x}-${y}`} x={x + 0.5} y={y + 0.5} width="4" height="4" stroke="#fff" />,
            ),
          )}
        </svg>
      )}
    </div>
  );
}

function Canvas() {
  return (
    <div className="relative min-w-0 flex-1 overflow-hidden bg-white font-['DejaVu_Sans',sans-serif] text-xs text-black">
      <DotGrid id="canvasDots" cell={20} />
      <div className="absolute left-8 top-8 h-[300px] w-[700px] rounded-[10px] border border-black bg-linear-to-b from-white to-[#c3d0d6]">
        <div className="h-[19px] border-b border-black text-center leading-5">StateMachineMain</div>
      </div>
      <svg viewBox="0 0 300 60" className="absolute left-16 top-24 h-[60px] w-[300px] overflow-visible" fill="none" stroke="#000">
        <circle cx="7.5" cy="16" r="9" fill="#000" stroke="none" />
        <path d="M16 18L78 26.5M65 19.5L78 26.5L62 29.5" />
        <path d="M129 26.5H218M203 21.5L218 26.5L203 31.5" />
      </svg>
      <StateNode name="MAIN1" className="left-[142px] top-[102px]" />
      <StateNode name="MAIN2" selected className="left-[282px] top-[102px]" />
    </div>
  );
}

const NODE_TOOLS = [
  ["region", "Region"], ["state", "State"], ["initial", "Initial"], ["final", "FinalState"],
  ["shallow", "ShallowHis..."], ["deep", "DeepHistory"], ["fork", "Fork"], ["join", "Join"],
  ["choice", "Choice"], ["junction", "Junction"], ["entry", "EntryPoint"],
];
const EDGE_TOOLS = [["transition", "Transition"], ["linkNode", "Link"], ["contextLink", "ContextLink"]];

function DrawerTitle({ title }: { title: string }) {
  return (
    <button className="flex h-[23px] w-full shrink-0 items-center gap-[3px] bg-[#f1f1f0] pl-[2px] text-left">
      <Icon name="cubes" />
      <span className="flex-1">{title}</span>
      <Icon name="pinDrawer" className="mr-[2px] h-[11px] w-[11px]" />
    </button>
  );
}

function PaletteItem({ icon, text }: { icon: string; text: string }) {
  return (
    <button className="flex h-6 w-full shrink-0 items-center gap-[3px] whitespace-nowrap pl-4">
      <Icon name={icon} />
      {text}
    </button>
  );
}

function Palette() {
  return (
    <aside className="mt-[2px] flex w-[126px] shrink-0 flex-col overflow-hidden border-l border-[#999] bg-white">
      <div className="flex h-[25px] shrink-0 items-center gap-[3px] border-b border-[#aaa] bg-linear-to-b from-white to-[#ececec] pl-1 pt-px">
        <Icon name="palette" />
        <span className="flex-1">Palette</span>
        <svg viewBox="0 0 8 12" className="mr-[9px] h-3 w-2" aria-hidden="true">
          <path d="M1 1V11L7 6Z" fill="#fff" stroke="#000" />
        </svg>
      </div>
      <div className="flex h-[23px] shrink-0 items-center gap-[2px] border-b border-[#aaa] bg-[#ededed] pl-px">
        <button aria-label="Select" className="border border-[#aaa] bg-[#f6f6f4] px-px">
          <Icon name="cursor" />
        </button>
        <Icon name="zoomIn" />
        <Icon name="zoomOut" className="ml-px" />
        <Icon name="marquee" />
        <svg viewBox="0 0 4 3" className="ml-1 mr-px h-[3px] w-1"><path d="M0 0H4L2 3Z" /></svg>
        <Icon name="marqueeRed" />
        <svg viewBox="0 0 4 3" className="ml-1 h-[3px] w-1"><path d="M0 0H4L2 3Z" /></svg>
      </div>
      <div className="mt-[2px] flex min-h-0 flex-1 flex-col overflow-hidden">
        <DrawerTitle title="Nodes" />
        {NODE_TOOLS.map(([icon, text]) => (
          <PaletteItem key={text} icon={icon} text={text} />
        ))}
        <div className="relative">
          <PaletteItem icon="entry" text="ExitPoint" />
          <button aria-label="Scroll down" className="absolute left-6 top-px flex h-3 w-[76px] justify-center bg-[#b0b0b0]/80">
            <svg viewBox="0 0 4 3" className="mt-[2px] h-[3px] w-1"><path d="M0 0H4L2 3Z" /></svg>
          </button>
        </div>
      </div>
      <div className="shrink-0 border-t border-[#aaa] pb-[2px] pt-px">
        <DrawerTitle title="Edges" />
        {EDGE_TOOLS.map(([icon, text]) => (
          <PaletteItem key={text} icon={icon} text={text} />
        ))}
      </div>
    </aside>
  );
}

function Editor() {
  return (
    <section className="flex min-h-0 flex-col border-y border-l border-[#999] bg-white">
      <div className="flex h-[26px] shrink-0">
        <button className="flex items-center gap-1 border-r border-[#999] bg-white pl-1 pr-[5px] pt-px text-black">
          <Icon name="papyrus" />
          import-main.di
          <Icon name="close" className="ml-[2px]" />
        </button>
        <div className="flex flex-1 items-center border-b border-[#999] bg-[#ededed] pl-1 pr-px">
          <button className="flex items-center gap-1 pt-[2px] text-[#555]">
            <Icon name="papyrus" />
            import-sub.di
          </button>
          <IconButton name="min" className="ml-auto" />
          <IconButton name="max" />
        </div>
      </div>
      <div className="flex min-h-0 flex-1">
        <Canvas />
        <Palette />
      </div>
      <div className="mb-[2px] flex h-[22px] shrink-0 border-t border-[#999] bg-[#ededed]">
        <button className="-mt-px ml-[2px] flex items-center gap-1 rounded-br border-b border-r border-[#999] bg-[#f0f0f0] px-1 text-black">
          <Icon name="smDiagram" />
          State Machine Diagram
          <Icon name="close" className="ml-[2px]" />
        </button>
      </div>
    </section>
  );
}

function PushButton({ icon, disabled }: { icon: string; disabled?: boolean }) {
  return (
    <button
      aria-label={icon}
      disabled={disabled}
      className={clsx(
        "flex h-[23px] w-6 shrink-0 items-center justify-center rounded border",
        disabled ? "border-[#ccc] bg-[#ececec]" : "border-[#aaa] bg-linear-to-b from-white to-[#ececec]",
      )}
    >
      <Icon name={icon} className={disabled ? "opacity-50" : undefined} />
    </button>
  );
}

function RefField({ label, value, icon, buttons, off }: { label: string; value: string; icon?: string; buttons: string[]; off?: string[] }) {
  return (
    <div className="flex min-w-0 flex-1 items-center">
      <span className="w-[132px] shrink-0">{label}</span>
      <div className="mr-2 flex h-[23px] min-w-0 flex-1 items-center gap-1 border-l border-t border-[#999] pl-[2px]">
        {icon && <Icon name={icon} />}
        {value}
      </div>
      <div className="flex gap-[7px]">
        {buttons.map((b) => (
          <PushButton key={b} icon={b} disabled={off?.includes(b)} />
        ))}
      </div>
    </div>
  );
}

const SECTIONS = ["UML", "Comments", "Profile", "Style", "Appearance", "Rulers And Grid", "Advanced"];
const OFF = ["pencil", "remove"];

function Properties() {
  const [section, setSection] = useState("UML");
  return (
    <section className="flex min-h-0 flex-col border-y border-l border-[#aaa]">
      <div className="flex h-[26px] shrink-0">
        <button className="flex items-center gap-1 border-r border-[#aaa] pl-1 pr-[5px] pt-[2px] text-black">
          <Icon name="properties" />
          Properties
          <Icon name="close" className="ml-[3px]" />
        </button>
        <div className="flex flex-1 items-center gap-[10px] border-b border-[#aaa] bg-[#dcdcdc] pl-1 pr-px text-[#555]">
          <button className="flex items-center gap-1 pt-[2px]"><Icon name="check" />Model Validation</button>
          <button className="flex items-center gap-1 pt-[2px]"><Icon name="references" />References</button>
          <button className="flex items-center gap-1 pt-[2px]"><Icon name="book" />Documentation</button>
          <div className="ml-auto flex">
            <IconButton name="pin" className="mr-1" />
            <IconButton name="dots" />
            <IconButton name="min" />
            <IconButton name="max" />
          </div>
        </div>
      </div>
      <h2 className="ml-[2px] flex h-[33px] shrink-0 items-center gap-1 bg-[#e9e9e9] pl-1 pt-[2px] text-base font-bold text-[#4c4c4c]">
        <Icon name="state" />
        MAIN2
      </h2>
      <div className="mb-[2px] ml-[2px] flex min-h-0 flex-1 overflow-hidden bg-white">
        <nav className="flex w-[130px] shrink-0 flex-col">
          <div className="h-[10px] shrink-0 border-b border-r border-[#aaa]" />
          {SECTIONS.map((s) => (
            <button
              key={s}
              onClick={() => setSection(s)}
              className={clsx(
                "h-6 shrink-0 border-b border-[#aaa] pl-[7px] text-left text-[#555]",
                s === section
                  ? "bg-white font-bold"
                  : "border-r border-t border-t-white bg-linear-to-b from-[#e6e6e6] to-[#d4d4d4]",
              )}
            >
              {s}
            </button>
          ))}
          <div className="flex-1 border-r border-[#aaa]" />
        </nav>
        <form className="flex min-w-0 flex-1 flex-col pl-[10px] pr-3 pt-[6px]" onSubmit={(e) => e.preventDefault()}>
          <div className="mb-3 flex items-center">
            <label htmlFor="name" className="w-[132px] shrink-0">Name</label>
            <input
              id="name"
              defaultValue="MAIN2"
              className="h-[27px] min-w-0 flex-1 rounded-md border border-[#999] px-[7px] outline-none"
            />
          </div>
          <div className="mb-[11px] flex items-center">
            <label htmlFor="label" className="w-[132px] shrink-0">Label</label>
            <input id="label" className="h-[27px] min-w-0 flex-1 rounded-md border border-[#999] px-[7px] outline-none" />
          </div>
          <div className="mb-[11px] flex gap-4">
            <RefField label="State invariant" value="<Undefined>" buttons={["ellipsis", "plus", "pencil", "remove"]} off={OFF} />
            <RefField label="Entry" value="<Undefined>" buttons={["plus", "pencil", "remove"]} off={OFF} />
          </div>
          <div className="mb-[11px] flex gap-4">
            <RefField label="Do activity" value="<Undefined>" buttons={["plus", "pencil", "remove"]} off={OFF} />
            <RefField label="Exit" value="<Undefined>" buttons={["plus", "pencil", "remove"]} off={OFF} />
          </div>
          <div className="mb-[11px] flex gap-4">
            <RefField label="Submachine" value="StateMachineSub" icon="stateMachine" buttons={["ellipsis", "plus", "pencil", "remove"]} />
            <div className="flex-1" />
          </div>
          <div className="mb-[6px] flex items-center gap-[2px] pr-1">
            <span className="flex-1">Deferrable trigger</span>
            <PushButton icon="plus" />
            <PushButton icon="remove" disabled />
            <PushButton icon="pencil" disabled />
          </div>
          <div className="mr-[3px] min-h-[52px] flex-1 border-x border-t border-[#bbb]" />
        </form>
      </div>
    </section>
  );
}

export default function App() {
  return (
    <div className="flex h-screen flex-col overflow-hidden bg-[#e1e1e1] font-['Noto_Sans',sans-serif] text-sm text-[#3c3c3c]">
      <Toolbar />
      <main className="flex min-h-0 flex-1 gap-1">
        <div className="grid w-[299px] shrink-0 grid-cols-1 grid-rows-[193fr_316fr_316fr] gap-1">
          <ProjectExplorer />
          <ModelExplorer />
          <Outline />
        </div>
        <div className="grid min-w-0 flex-1 grid-cols-1 grid-rows-[499fr_330fr] gap-1">
          <Editor />
          <Properties />
        </div>
      </main>
      <footer className="flex h-[26px] shrink-0 flex-col bg-[linear-gradient(to_right,#1c1c1c_64%,#bbb_64%)] pb-px">
        <div className="flex flex-1 items-center bg-[#e1e1e1]">
          <span className="ml-auto mr-[316px] h-4 w-[2px] bg-[repeating-linear-gradient(#a09f95_0_2px,#e1e1e1_2px_4px)]" />
        </div>
      </footer>
    </div>
  );
}
